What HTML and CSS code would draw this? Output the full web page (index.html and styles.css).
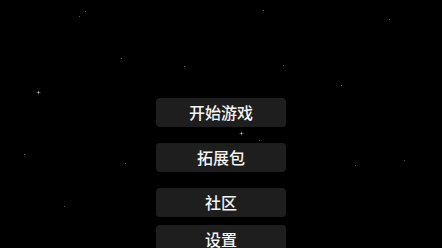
FILE: index.html
```html
<!DOCTYPE html>
<html lang="zh-CN">
<head>
    <meta charset="UTF-8">
    <meta name="viewport" content="width=device-width, initial-scale=1.0">
    <title>主菜单</title>
    <link rel="stylesheet" href="styles.css">
</head>
<body>
    <!-- 星空背景 -->
    <div class="sky">
        <span class="star" style="left:79px;top:16px"></span>
        <span class="star" style="left:85px;top:11px"></span>
        <span class="star" style="left:121px;top:58px"></span>
        <span class="star" style="left:184px;top:66px"></span>
        <span class="star sparkle" style="left:38px;top:92px"></span>
        <span class="star" style="left:263px;top:10px"></span>
        <span class="star" style="left:389px;top:19px"></span>
        <span class="star" style="left:283px;top:65px"></span>
        <span class="star" style="left:341px;top:85px"></span>
        <span class="star" style="left:24px;top:154px"></span>
        <span class="star" style="left:125px;top:163px"></span>
        <span class="star" style="left:64px;top:206px"></span>
        <span class="star sparkle" style="left:241px;top:133px"></span>
        <span class="star" style="left:259px;top:140px"></span>
        <span class="star" style="left:355px;top:165px"></span>
        <span class="star" style="left:404px;top:160px"></span>
    </div>

    <nav class="menu">
        <a href="#" class="menu-btn">开始游戏</a>
        <a href="#" class="menu-btn">拓展包</a>
        <a href="#" class="menu-btn menu-btn-near">社区</a>
        <a href="#" class="menu-btn">设置</a>
    </nav>
</body>
</html>
```

FILE: styles.css
```css
:root {
    --bg-color: #000;
    --btn-color: #1e1e1e;
    --text-color: #f4f4f4;
}
html, body {
    height: 100%;
}
body {
    margin: 0;
    background-color: var(--bg-color);
    font-family: 'Noto Sans CJK SC', 'Noto Sans', sans-serif;
    overflow: hidden;
    position: relative;
}
.sky {
    position: absolute;
    inset: 0;
}
.star {
    position: absolute;
    width: 1px;
    height: 1px;
    background-color: #5a5a5a;
}
.sparkle {
    background-color: #bbb;
    box-shadow:
        -1px 0 0 #666, 1px 0 0 #666,
        0 -1px 0 #666, 0 1px 0 #666,
        -2px 0 0 #2a2a2a, 2px 0 0 #2a2a2a,
        0 -2px 0 #2a2a2a, 0 2px 0 #2a2a2a;
}
.menu {
    position: relative;
    display: flex;
    flex-direction: column;
    align-items: center;
    padding-top: 98px;
}
.menu-btn {
    width: 130px;
    height: 29px;
    margin-bottom: 16px;
    background-color: var(--btn-color);
    border-radius: 4px;
    color: var(--text-color);
    font-size: 16px;
    font-weight: 500;
    line-height: 29px;
    text-align: center;
    text-decoration: none;
}
.menu-btn-near {
    margin-bottom: 8px;
}
```
